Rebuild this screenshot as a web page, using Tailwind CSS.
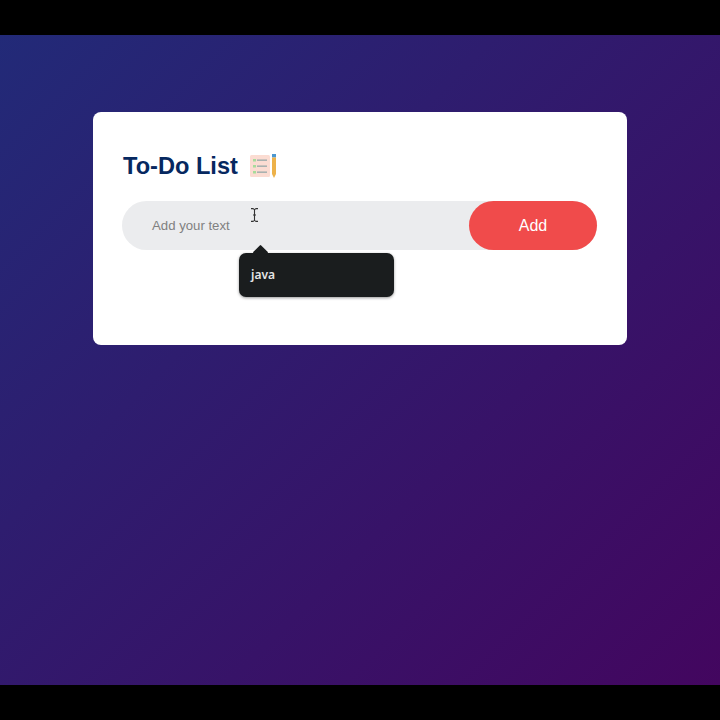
<!DOCTYPE html>
<html>
<head>
<meta charset="utf-8">
<script src="https://cdn.jsdelivr.net/npm/@tailwindcss/browser@4"></script>
</head>
<body class="bg-black">
<div class="w-[720px] h-[720px] flex flex-col bg-black font-['Liberation_Sans',Arial,sans-serif] overflow-hidden">
  <div class="h-[35px] shrink-0 bg-black"></div>
  <main class="h-[650px] shrink-0 bg-[linear-gradient(135deg,#222a78,#43065f)] pt-[77px] px-[93px]">
    <section class="relative w-[534px] h-[233px] bg-white rounded-[8px] pt-[37px] px-[30px]">
      <div class="flex items-center gap-[11px] h-[34px]">
        <h1 class="text-[23.6px] leading-[34px] font-bold text-[#062860]">To-Do List</h1>
        <svg class="w-[28px] h-[26px]" viewBox="0 0 28 26">
          <rect x="1" y="2" width="20" height="22" rx="1.5" fill="#fbdcd2"/>
          <rect x="4" y="6" width="3" height="2.5" fill="#a6dc9a"/>
          <rect x="8" y="6.4" width="10" height="1.6" fill="#a9b2b0"/>
          <rect x="4" y="12" width="3" height="2.5" fill="#a6dc9a"/>
          <rect x="8" y="12.4" width="10" height="1.6" fill="#a9b2b0"/>
          <rect x="4" y="18" width="3" height="2.5" fill="#a6dc9a"/>
          <rect x="8" y="18.4" width="10" height="1.6" fill="#a9b2b0"/>
          <rect x="23" y="1" width="4" height="3.5" fill="#4b97d0"/>
          <path d="M23 4.500h4V21l-2 4-2-4z" fill="#edb24a"/>
        </svg>
      </div>
      <div class="mt-[18px] -ml-px flex items-center h-[49px] bg-[#ebecee] rounded-full">
        <span class="flex-1 pl-[30px] text-[13.2px] text-[#808080]">Add your text</span>
        <button class="w-[128px] h-[49px] bg-[#f04b4b] rounded-full text-white text-[16px]">Add</button>
      </div>
      <svg class="absolute left-[157px] top-[96px] w-[9px] h-[14px]" viewBox="0 0 9 14" fill="none" stroke="#333" stroke-width="1.100">
        <path d="M1 .6h2l1.500 1 1.500-1h2M4.500 1.600v10.800M1 13.400h2l1.500-1 1.500 1h2M3 7h3"/>
      </svg>
      <div class="absolute left-[146px] top-[141px] w-[155px] h-[44px] bg-[#1a1d1e] rounded-[7px] shadow-[0_1px_3px_rgba(0,0,0,0.4)] flex items-center px-[12px] text-[12px] font-semibold text-[#e5e5e5] font-['Noto_Sans',sans-serif]">
        <div class="absolute -top-[6px] left-[16px] w-[11px] h-[11px] rotate-45 bg-[#1a1d1e] rounded-[1px]"></div>
        <span class="relative">java</span>
      </div>
    </section>
  </main>
  <div class="h-[35px] shrink-0 bg-black"></div>
</div>
</body>
</html>
